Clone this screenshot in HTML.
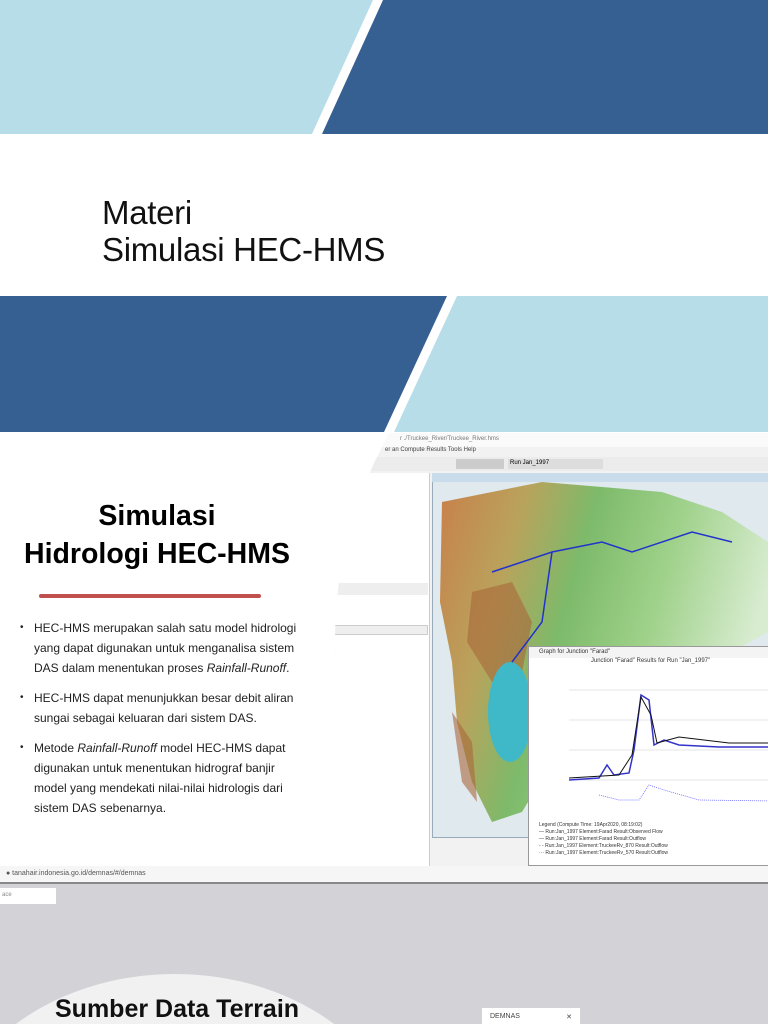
<!DOCTYPE html>
<html><head><meta charset="utf-8"><style>
*{margin:0;padding:0;box-sizing:border-box}
body{width:768px;height:1024px;overflow:hidden;position:relative;background:#fff;font-family:"Liberation Sans",sans-serif}
.abs{position:absolute}
.t1{font-family:"Liberation Sans",sans-serif;font-weight:300;font-size:33px;color:#111;left:102px;line-height:37px;letter-spacing:-0.3px}
.b{font-size:12px;color:#222;line-height:20px;left:20px;width:282px}
.b li{list-style:none;padding-left:14px;position:relative;margin-bottom:10px}
.b li:before{content:"•";position:absolute;left:0;font-size:10px}
</style></head><body>
<svg class="abs" style="left:0;top:0" width="768" height="432">
<polygon points="0,0 373,0 312,134 0,134" fill="#b7dee8"/>
<polygon points="383,0 768,0 768,134 322,134" fill="#376092"/>
<polygon points="0,296 447,296 384,432 0,432" fill="#376092"/>
<polygon points="457,296 768,296 768,432 394,432" fill="#b7dee8"/>
</svg>
<div class="abs t1" style="top:194px">Materi<br>Simulasi HEC-HMS</div>

<!-- slide 2 screenshot -->
<div class="abs" style="left:330px;top:433px;width:438px;height:433px;background:#f2f2f2;clip-path:circle(420px at 425px 207px)">
 <div class="abs" style="left:0;top:0;width:438px;height:14px;background:#fafafa;font-size:6px;color:#777;padding:3px 0 0 70px">r ./Truckee_River/Truckee_River.hms</div>
 <div class="abs" style="left:55px;top:14px;font-size:6px;color:#444">er an Compute Results Tools Help</div>
 <div class="abs" style="left:0;top:24px;width:438px;height:14px;background:#ececec"></div>
 <div class="abs" style="left:126px;top:26px;width:48px;height:10px;background:#ccc"></div>
 <div class="abs" style="left:178px;top:26px;width:95px;height:10px;background:#ddd;font-size:6px;padding:1px 2px">Run Jan_1997</div>
 <div class="abs" style="left:0;top:40px;width:100px;height:400px;background:#fff;border-right:1px solid #ccc"></div>
 <div class="abs" style="left:0;top:150px;width:98px;height:12px;background:#eee"></div>
 <div class="abs" style="left:0;top:192px;width:98px;height:10px;background:#eee;border:1px solid #ccc"></div>
 <div class="abs" style="left:102px;top:40px;width:340px;height:365px;background:#dfe9ee;border:1px solid #9ab"></div>
 <div class="abs" style="left:102px;top:40px;width:340px;height:9px;background:#c9dceb"></div>
 <svg class="abs" style="left:102px;top:49px" width="336" height="356">
  <defs><linearGradient id="tg" x1="0" y1="0" x2="1" y2="0.3">
   <stop offset="0" stop-color="#c8804a"/><stop offset="0.25" stop-color="#b9a35c"/><stop offset="0.45" stop-color="#7dba6a"/><stop offset="0.7" stop-color="#9fd18a"/><stop offset="1" stop-color="#d8ecd0"/></linearGradient></defs>
  <path d="M10,20 L60,10 L110,0 L170,5 L230,10 L290,30 L336,60 L336,150 L300,170 L210,180 L150,190 L140,230 L120,280 L90,330 L60,340 L40,300 L25,240 L20,180 L8,120 Z" fill="url(#tg)"/>
  <path d="M40,110 L80,100 L100,140 L90,190 L60,200 L35,160 Z" fill="#a9683a" opacity=".6"/>
  <path d="M20,230 L40,260 L45,320 L60,340 L30,300 Z" fill="#a9683a" opacity=".6"/>
  <ellipse cx="78" cy="230" rx="22" ry="50" fill="#3fb8c8"/>
  <path d="M60,90 L120,70 L170,60 L200,70 L260,50 L300,60 M120,70 L110,140 L80,180" stroke="#2233cc" stroke-width="1.5" fill="none"/>
 </svg>
 <div class="abs" style="left:198px;top:213px;width:245px;height:220px;background:#fff;border:1px solid #999">
  <div style="height:11px;background:#f4f4f4;font-size:6px;padding:2px 10px;color:#333">Graph for Junction "Farad"</div>
  <div style="font-size:6px;text-align:center;color:#333">Junction "Farad" Results for Run "Jan_1997"</div>
  <svg class="abs" style="left:40px;top:28px" width="205" height="130">
   <g stroke="#ccc" stroke-width=".5"><line x1="0" y1="15" x2="205" y2="15"/><line x1="0" y1="45" x2="205" y2="45"/><line x1="0" y1="75" x2="205" y2="75"/><line x1="0" y1="105" x2="205" y2="105"/></g>
   <path d="M0,105 L30,103 L38,90 L45,100 L60,98 L65,75 L72,20 L80,25 L85,70 L95,65 L110,70 L150,72 L200,72" stroke="#3333cc" stroke-width="1.5" fill="none"/>
   <path d="M0,103 L50,100 L63,80 L72,22 L82,40 L88,68 L110,62 L160,68 L205,68" stroke="#111" stroke-width="1" fill="none"/>
   <path d="M30,120 L50,125 L70,125 L80,110 L95,115 L130,125 L205,126" stroke="#66f" stroke-width=".8" stroke-dasharray="1,1" fill="none"/>
  </svg>
  <div class="abs" style="left:10px;top:175px;font-size:5px;color:#333;line-height:7px">Legend (Compute Time: 19Apr2020, 08:19:02)<br>— Run:Jan_1997 Element:Farad Result:Observed Flow<br>— Run:Jan_1997 Element:Farad Result:Outflow<br>- - Run:Jan_1997 Element:TruckeeRv_870 Result:Outflow<br>··· Run:Jan_1997 Element:TruckeeRv_570 Result:Outflow</div>
 </div>
</div>
<div class="abs" style="left:0;top:497px;width:314px;text-align:center;font-weight:bold;font-size:28.5px;line-height:38px;color:#000">Simulasi<br>Hidrologi HEC-HMS</div>
<div class="abs" style="left:39px;top:594px;width:222px;height:4px;background:#c0504d;border-radius:2px"></div>
<ul class="abs b" style="top:618px">
<li>HEC-HMS merupakan salah satu model hidrologi yang dapat digunakan untuk menganalisa sistem DAS dalam menentukan proses <i>Rainfall-Runoff</i>.</li>
<li>HEC-HMS dapat menunjukkan besar debit aliran sungai sebagai keluaran dari sistem DAS.</li>
<li>Metode <i>Rainfall-Runoff</i> model HEC-HMS dapat digunakan untuk menentukan hidrograf banjir model yang mendekati nilai-nilai hidrologis dari sistem DAS sebenarnya.</li>
</ul>

<!-- slide 3 -->
<div class="abs" style="left:0;top:866px;width:768px;height:158px;background:#d3d3d7;overflow:hidden">
 <div class="abs" style="left:0;top:0;width:768px;height:16px;background:#f6f6f6;font-size:7px;color:#555;padding:4px 0 0 6px">● tanahair.indonesia.go.id/demnas/#/demnas</div>
 <div class="abs" style="left:0;top:16px;width:768px;height:2px;background:#888"></div>
 <div class="abs" style="left:0;top:22px;width:56px;height:16px;background:#fff;font-size:6px;color:#888;padding:4px 2px">ace</div>
 <div class="abs" style="left:-55px;top:108px;width:460px;height:360px;border-radius:50%;background:#f1f1f2"></div>
 <div class="abs" style="left:55px;top:129px;font-weight:bold;font-size:25px;color:#111">Sumber Data Terrain</div>
 <div class="abs" style="left:482px;top:142px;width:98px;height:20px;background:#fff;font-size:7px;color:#444;padding:5px 8px">DEMNAS<span style="float:right">✕</span></div>
</div>
</body></html>
